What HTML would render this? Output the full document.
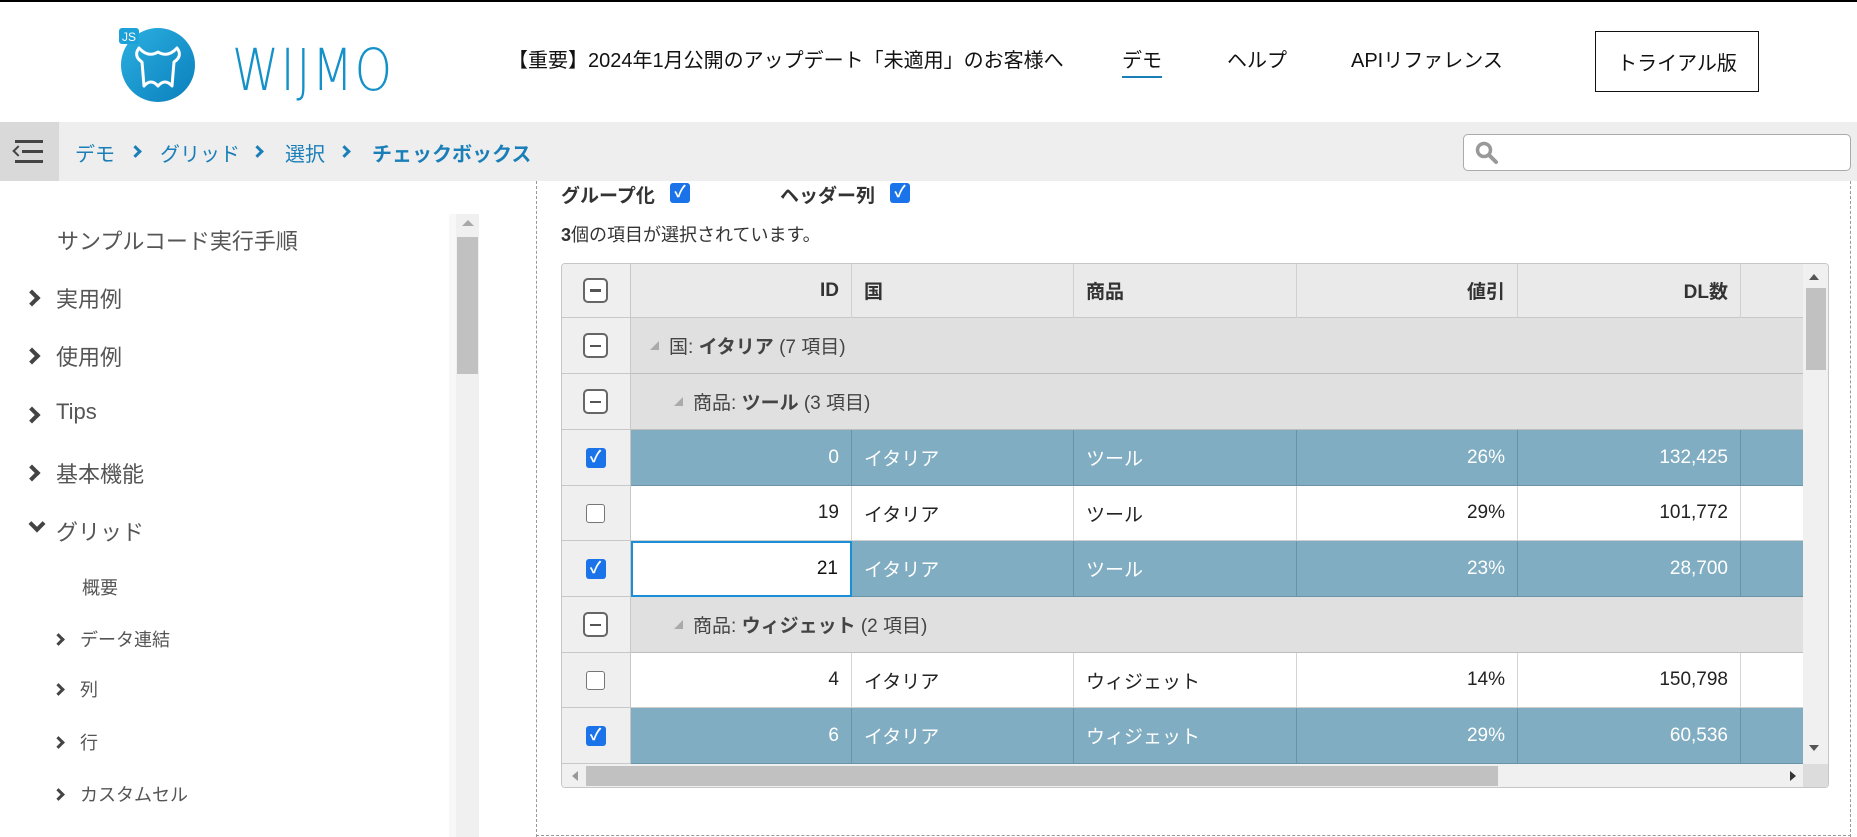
<!DOCTYPE html>
<html><head><meta charset="utf-8"><style>
*{box-sizing:border-box;margin:0;padding:0}
body{width:1857px;height:837px;overflow:hidden;position:relative;background:#fff;font-family:"Liberation Sans","Noto Sans CJK JP",sans-serif;color:#333}
.a{position:absolute;white-space:nowrap}
.c{position:absolute;display:flex;align-items:center;font-size:19px;white-space:nowrap;overflow:hidden}
.r{justify-content:flex-end;padding-right:12px}
.l{padding-left:12px}
.sel{background:#80adc1;color:#fff;border-right:1px solid #6a93a6;border-bottom:1px solid #6a93a6}
.wh{background:#fff;color:#222;border-right:1px solid #d4d4d4;border-bottom:1px solid #cfcfcf}
.rh{background:#efefef;border-right:1px solid #c8c8c8;border-bottom:1px solid #c8c8c8;justify-content:center}
.grp{background:#e0e0e0;border-bottom:1px solid #bdbdbd;color:#444}
.cbon{width:20px;height:20px;border-radius:3px;background:#1a73e8;color:#fff;font-size:16px;line-height:20px;text-align:center;font-weight:bold}
.cboff{width:19px;height:19px;border-radius:3px;border:1.5px solid #767676;background:#fff}
.mn{width:25px;height:25px;border-radius:5px;border:2px solid #666;background:#fff;position:relative}
.mn:after{content:"";position:absolute;left:5px;right:5px;top:9.5px;height:2.5px;background:#555}
.tri{display:inline-block;width:0;height:0;border-left:9px solid transparent;border-bottom:9px solid #aaa;margin-right:10px}
.sb{position:absolute;left:26px;width:12px;height:12px;border-right:4px solid #444;border-top:4px solid #444;transform:rotate(45deg)}
.ss{position:absolute;width:9px;height:9px;border-right:3.5px solid #444;border-top:3.5px solid #444;transform:rotate(45deg)}
.nav{font-size:20px;color:#111}
</style></head><body>
<div class="a" style="left:0;top:0;width:1857px;height:2px;background:#000"></div>
<svg class="a" style="left:115px;top:22px" width="90" height="85" viewBox="0 0 90 85">
<defs><linearGradient id="g" x1="0" y1="0" x2="1" y2="1"><stop offset="0" stop-color="#2cb0e0"/><stop offset="1" stop-color="#0a7fbd"/></linearGradient></defs>
<circle cx="43" cy="43" r="37" fill="url(#g)"/>
<rect x="4" y="6" width="20" height="16" rx="3" fill="#1ca2d8"/>
<text x="7" y="19" font-size="12" fill="#fff" font-family="Liberation Sans">JS</text>
<path d="M24 26 Q33 36 43 30 Q53 36 62 26 Q68 34 59 40 L57 64 Q50 56 43 64 Q36 56 29 64 L27 40 Q18 34 24 26Z" fill="none" stroke="#fff" stroke-width="3" stroke-linejoin="round"/>
</svg>
<div class="a" style="left:232px;top:36px;font-size:58px;color:#1391c8;letter-spacing:2px;transform:scaleX(0.82);transform-origin:left;font-family:'DejaVu Sans','Liberation Sans',sans-serif;font-weight:200">WIJMO</div>
<div class="a nav" style="left:508px;top:44px">【重要】2024年1月公開のアップデート「未適用」のお客様へ</div>
<div class="a nav" style="left:1122px;top:44px">デモ</div>
<div class="a" style="left:1122px;top:76px;width:40px;height:2px;background:#1a7fb8"></div>
<div class="a nav" style="left:1227px;top:44px">ヘルプ</div>
<div class="a nav" style="left:1351px;top:44px">APIリファレンス</div>
<div class="a" style="left:1595px;top:31px;width:164px;height:61px;border:1.5px solid #111;display:flex;align-items:center;justify-content:center;font-size:20px;color:#111">トライアル版</div>
<div class="a" style="left:0;top:122px;width:1857px;height:59px;background:#eeeeee"></div>
<div class="a" style="left:0;top:122px;width:59px;height:59px;background:#d9d9d9"></div>
<div class="a" style="left:15px;top:140px;width:28px;height:3px;background:#444"></div>
<div class="a" style="left:22px;top:150px;width:21px;height:3px;background:#444"></div>
<div class="a" style="left:15px;top:160px;width:28px;height:3px;background:#444"></div>
<div class="a" style="left:14px;top:147px;width:8px;height:8px;border-left:2px solid #444;border-bottom:2px solid #444;transform:rotate(45deg)"></div>
<div class="a" style="left:75px;top:138px;font-size:20px;color:#1a7fb8">デモ</div>
<div class="ss" style="left:131px;top:147px;border-color:#1a7fb8"></div>
<div class="a" style="left:160px;top:138px;font-size:20px;color:#1a7fb8">グリッド</div>
<div class="ss" style="left:253px;top:147px;border-color:#1a7fb8"></div>
<div class="a" style="left:285px;top:138px;font-size:20px;color:#1a7fb8">選択</div>
<div class="ss" style="left:340px;top:147px;border-color:#1a7fb8"></div>
<div class="a" style="left:372px;top:138px;font-size:20px;color:#1a7fb8;font-weight:bold">チェックボックス</div>
<div class="a" style="left:1463px;top:134px;width:388px;height:37px;background:#fff;border:1px solid #aaa;border-radius:5px"></div>
<svg class="a" style="left:1475px;top:141px" width="24" height="24"><circle cx="9" cy="9" r="6.5" fill="none" stroke="#999" stroke-width="3.5"/><line x1="14" y1="14" x2="21" y2="21" stroke="#999" stroke-width="4" stroke-linecap="round"/></svg>
<div class="a" style="left:57px;top:224px;font-size:22px;color:#555">サンプルコード実行手順</div>
<div class="sb" style="top:292px"></div><div class="a" style="left:56px;top:282px;font-size:22px;color:#555">実用例</div>
<div class="sb" style="top:350px"></div><div class="a" style="left:56px;top:340px;font-size:22px;color:#555">使用例</div>
<div class="sb" style="top:409px"></div><div class="a" style="left:56px;top:399px;font-size:22px;color:#555">Tips</div>
<div class="sb" style="top:467px"></div><div class="a" style="left:56px;top:457px;font-size:22px;color:#555">基本機能</div>
<div class="a" style="left:31px;top:518px;width:12px;height:12px;border-right:4px solid #444;border-bottom:4px solid #444;transform:rotate(45deg)"></div>
<div class="a" style="left:56px;top:515px;font-size:22px;color:#555">グリッド</div>
<div class="a" style="left:82px;top:574px;font-size:18px;color:#555">概要</div>
<div class="ss" style="left:54px;top:635px"></div><div class="a" style="left:80px;top:626px;font-size:18px;color:#555">データ連結</div>
<div class="ss" style="left:54px;top:685px"></div><div class="a" style="left:80px;top:676px;font-size:18px;color:#555">列</div>
<div class="ss" style="left:54px;top:738px"></div><div class="a" style="left:80px;top:729px;font-size:18px;color:#555">行</div>
<div class="ss" style="left:54px;top:790px"></div><div class="a" style="left:80px;top:781px;font-size:18px;color:#555">カスタムセル</div>
<div class="a" style="left:449px;top:214px;width:7px;height:623px;background:#f8f8f8"></div>
<div class="a" style="left:456px;top:214px;width:23px;height:623px;background:#f0f0f0"></div>
<div class="a" style="left:462px;top:220px;width:0;height:0;border-left:6px solid transparent;border-right:6px solid transparent;border-bottom:6px solid #a8a8a8"></div>
<div class="a" style="left:457px;top:237px;width:21px;height:137px;background:#c1c1c1"></div>
<div class="a" style="left:536px;top:181px;height:656px;border-left:1px dashed #999"></div>
<div class="a" style="left:1850px;top:181px;height:656px;border-left:1px dashed #999"></div>
<div class="a" style="left:536px;top:835px;width:1315px;border-top:1px dashed #999"></div>
<div class="a" style="left:561px;top:181px;font-size:19px;font-weight:bold;color:#333">グループ化</div>
<div class="a cbon" style="left:670px;top:183px">✓</div>
<div class="a" style="left:780px;top:181px;font-size:19px;font-weight:bold;color:#333">ヘッダー列</div>
<div class="a cbon" style="left:890px;top:183px">✓</div>
<div class="a" style="left:561px;top:221px;font-size:18px;color:#333"><b>3</b>個の項目が選択されています。</div>
<div class="a" style="left:561px;top:263px;width:1268px;height:525px;border:1px solid #c6c6c6;border-radius:4px;overflow:hidden;background:#fff">
<div style="position:absolute;left:-562px;top:-264px;width:1857px;height:837px">
<div class="c rh" style="left:561px;top:263px;width:70px;height:55px"><div class="mn"></div></div>
<div class="c" style="left:631px;top:263px;width:1172px;height:55px;background:#eaeaea;border-bottom:1px solid #c8c8c8"></div>
<div class="c r" style="left:631px;top:263px;width:221px;height:55px;border-right:1px solid #d0d0d0;font-weight:bold">ID</div>
<div class="c l" style="left:852px;top:263px;width:222px;height:55px;border-right:1px solid #d0d0d0;font-weight:bold">国</div>
<div class="c l" style="left:1074px;top:263px;width:223px;height:55px;border-right:1px solid #d0d0d0;font-weight:bold">商品</div>
<div class="c r" style="left:1297px;top:263px;width:221px;height:55px;border-right:1px solid #d0d0d0;font-weight:bold">値引</div>
<div class="c r" style="left:1518px;top:263px;width:223px;height:55px;border-right:1px solid #d0d0d0;font-weight:bold">DL数</div>
<div class="c rh" style="left:561px;top:318px;width:70px;height:56px"><div class="mn"></div></div>
<div class="c grp" style="left:631px;top:318px;width:1172px;height:56px;padding-left:19px"><span class="tri"></span>国:&nbsp;<b>イタリア</b>&nbsp;(7 項目)</div>
<div class="c rh" style="left:561px;top:374px;width:70px;height:56px"><div class="mn"></div></div>
<div class="c grp" style="left:631px;top:374px;width:1172px;height:56px;padding-left:43px"><span class="tri"></span>商品:&nbsp;<b>ツール</b>&nbsp;(3 項目)</div>
<div class="c rh" style="left:561px;top:430px;width:70px;height:56px"><div class="cbon">✓</div></div>
<div class="c r sel" style="left:631px;top:430px;width:221px;height:56px">0</div>
<div class="c l sel" style="left:852px;top:430px;width:222px;height:56px">イタリア</div>
<div class="c l sel" style="left:1074px;top:430px;width:223px;height:56px">ツール</div>
<div class="c r sel" style="left:1297px;top:430px;width:221px;height:56px">26%</div>
<div class="c r sel" style="left:1518px;top:430px;width:223px;height:56px">132,425</div>
<div class="c sel" style="left:1741px;top:430px;width:62px;height:56px;border-right:0"></div>
<div class="c rh" style="left:561px;top:486px;width:70px;height:55px"><div class="cboff"></div></div>
<div class="c r wh" style="left:631px;top:486px;width:221px;height:55px">19</div>
<div class="c l wh" style="left:852px;top:486px;width:222px;height:55px">イタリア</div>
<div class="c l wh" style="left:1074px;top:486px;width:223px;height:55px">ツール</div>
<div class="c r wh" style="left:1297px;top:486px;width:221px;height:55px">29%</div>
<div class="c r wh" style="left:1518px;top:486px;width:223px;height:55px">101,772</div>
<div class="c wh" style="left:1741px;top:486px;width:62px;height:55px;border-right:0"></div>
<div class="c rh" style="left:561px;top:541px;width:70px;height:56px"><div class="cbon">✓</div></div>
<div class="c r" style="left:631px;top:541px;width:221px;height:56px;background:#fff;color:#111;border:2px solid #1a8fd6">21</div>
<div class="c l sel" style="left:852px;top:541px;width:222px;height:56px">イタリア</div>
<div class="c l sel" style="left:1074px;top:541px;width:223px;height:56px">ツール</div>
<div class="c r sel" style="left:1297px;top:541px;width:221px;height:56px">23%</div>
<div class="c r sel" style="left:1518px;top:541px;width:223px;height:56px">28,700</div>
<div class="c sel" style="left:1741px;top:541px;width:62px;height:56px;border-right:0"></div>
<div class="c rh" style="left:561px;top:597px;width:70px;height:56px"><div class="mn"></div></div>
<div class="c grp" style="left:631px;top:597px;width:1172px;height:56px;padding-left:43px"><span class="tri"></span>商品:&nbsp;<b>ウィジェット</b>&nbsp;(2 項目)</div>
<div class="c rh" style="left:561px;top:653px;width:70px;height:55px"><div class="cboff"></div></div>
<div class="c r wh" style="left:631px;top:653px;width:221px;height:55px">4</div>
<div class="c l wh" style="left:852px;top:653px;width:222px;height:55px">イタリア</div>
<div class="c l wh" style="left:1074px;top:653px;width:223px;height:55px">ウィジェット</div>
<div class="c r wh" style="left:1297px;top:653px;width:221px;height:55px">14%</div>
<div class="c r wh" style="left:1518px;top:653px;width:223px;height:55px">150,798</div>
<div class="c wh" style="left:1741px;top:653px;width:62px;height:55px;border-right:0"></div>
<div class="c rh" style="left:561px;top:708px;width:70px;height:56px"><div class="cbon">✓</div></div>
<div class="c r sel" style="left:631px;top:708px;width:221px;height:56px">6</div>
<div class="c l sel" style="left:852px;top:708px;width:222px;height:56px">イタリア</div>
<div class="c l sel" style="left:1074px;top:708px;width:223px;height:56px">ウィジェット</div>
<div class="c r sel" style="left:1297px;top:708px;width:221px;height:56px">29%</div>
<div class="c r sel" style="left:1518px;top:708px;width:223px;height:56px">60,536</div>
<div class="c sel" style="left:1741px;top:708px;width:62px;height:56px;border-right:0"></div>
<div class="a" style="left:1803px;top:263px;width:26px;height:525px;background:#f0f0f0"></div>
<div class="a" style="left:1809px;top:274px;border-left:5px solid transparent;border-right:5px solid transparent;border-bottom:6px solid #555"></div>
<div class="a" style="left:1806px;top:288px;width:20px;height:82px;background:#c1c1c1"></div>
<div class="a" style="left:1809px;top:745px;border-left:5px solid transparent;border-right:5px solid transparent;border-top:6px solid #555"></div>
<div class="a" style="left:561px;top:764px;width:1242px;height:24px;background:#f0f0f0"></div>
<div class="a" style="left:1803px;top:764px;width:26px;height:24px;background:#dcdcdc"></div>
<div class="a" style="left:572px;top:771px;border-top:5px solid transparent;border-bottom:5px solid transparent;border-right:6px solid #999"></div>
<div class="a" style="left:586px;top:766px;width:912px;height:20px;background:#c1c1c1"></div>
<div class="a" style="left:1790px;top:771px;border-top:5px solid transparent;border-bottom:5px solid transparent;border-left:6px solid #333"></div>
</div></div>
</body></html>
